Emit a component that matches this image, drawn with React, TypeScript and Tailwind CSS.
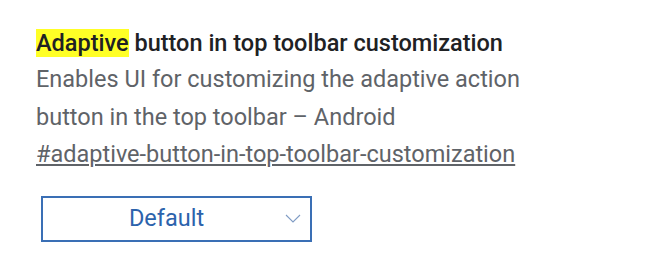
import React from "react";

export default function App() {
  return (
    <div className="w-[650px] h-[266px] bg-white font-['Roboto',sans-serif] pl-9 pt-[25px]">
      <h1 className="text-[23.5px] leading-[36px] font-medium text-[#202124]">
        <span className="bg-[#ffff26]">Adaptive</span> button in top toolbar customization
      </h1>
      <p className="text-[23.5px] leading-[37.5px] text-[#5f6368]">
        Enables UI for customizing the adaptive action
        <br />
        button in the top toolbar – Android
      </p>
      <a className="text-[23.5px] leading-[37.5px] text-[#5f6368] underline block">
        #adaptive-button-in-top-toolbar-customization
      </a>
      <div className="mt-[22px] ml-[5px] w-[271px] h-[46px] border-2 border-[#3a6fb5] flex items-center relative">
        <span className="flex-1 text-center text-[23.5px] text-[#2c63ac] pr-[20px]">Default</span>
        <svg className="absolute right-[9px]" width="16" height="10" viewBox="0 0 16 10">
          <path d="M1 1 L8 8 L15 1" fill="none" stroke="#7f9cc4" strokeWidth="1.1" />
        </svg>
      </div>
    </div>
  );
}
